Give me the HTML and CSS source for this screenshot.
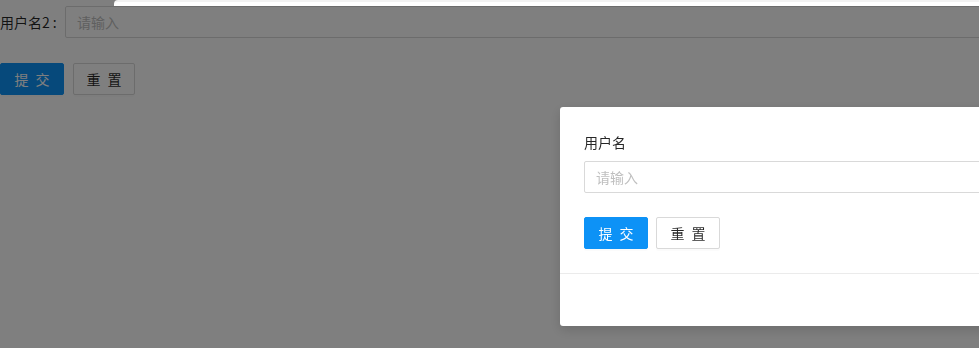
FILE: index.html
```html
<!DOCTYPE html>
<html lang="zh-CN">
<head>
  <meta charset="UTF-8">
  <title>表单</title>
  <link rel="stylesheet" href="styles.css">
</head>
<body>
  <div class="page">
    <div class="form-row">
      <label class="inline-label">用户名2</label>
      <input class="text-input" type="text" placeholder="请输入">
    </div>
    <div class="btn-row">
      <button class="btn btn-primary">提 交</button>
      <button class="btn btn-default narrow">重 置</button>
    </div>
  </div>

  <div class="mask"></div>
  <div class="top-strip"></div>

  <div class="modal">
    <div class="modal-body">
      <div class="form-item">
        <label class="vertical-label">用户名</label>
        <input class="text-input" type="text" placeholder="请输入">
      </div>
      <div class="btn-row modal-btns">
        <button class="btn btn-primary">提 交</button>
        <button class="btn btn-default">重 置</button>
      </div>
    </div>
    <div class="modal-footer"></div>
  </div>
</body>
</html>
```
FILE: styles.css
```css
html, body {
  margin: 0;
  height: 100%;
  overflow: hidden;
}
body {
  font-family: "Noto Sans CJK SC", "Noto Sans", sans-serif;
  font-size: 14px;
  color: rgba(0, 0, 0, 0.85);
  background: #fff;
}

.page {
  width: 1200px;
  padding-top: 6px;
}
.form-row {
  display: flex;
  align-items: center;
}
.inline-label {
  width: 65px;
  line-height: 32px;
  white-space: nowrap;
}
.inline-label::after {
  content: ":";
  margin: 0 8px 0 3px;
}
.text-input {
  box-sizing: border-box;
  flex: 1;
  height: 32px;
  padding: 4px 11px;
  border: 1px solid #d9d9d9;
  border-radius: 2px;
  font-family: inherit;
  font-size: 14px;
  color: rgba(0, 0, 0, 0.85);
  background: #fff;
  outline: none;
}
.text-input::placeholder {
  color: #bfbfbf;
}

.btn-row {
  display: flex;
  gap: 9px;
  margin-top: 25px;
}
.btn {
  box-sizing: border-box;
  width: 64px;
  height: 32px;
  padding: 0;
  border: 1px solid #d9d9d9;
  border-radius: 2px;
  font-family: inherit;
  font-size: 14px;
  letter-spacing: 2px;
  text-indent: 2px;
  box-shadow: 0 2px 0 rgba(0, 0, 0, 0.015);
  cursor: pointer;
}
.btn.narrow { width: 62px; }
.btn-primary {
  color: #fff;
  background: #0d92f6;
  border-color: #0d92f6;
}
.btn-default {
  color: rgba(0, 0, 0, 0.85);
  background: #fff;
}

.mask {
  position: fixed;
  inset: 0;
  background: rgba(0, 0, 0, 0.5);
}
.top-strip {
  position: fixed;
  top: 0;
  left: 114px;
  right: 0;
  height: 6px;
  box-sizing: border-box;
  background: #fff;
  border-top: 2px solid #f2f2f2;
  border-radius: 4px 0 0 0;
}

.modal {
  position: fixed;
  top: 107px;
  left: 560px;
  right: -60px;
  background: #fff;
  border-radius: 3px;
  box-shadow: 0 4px 12px rgba(0, 0, 0, 0.15);
}
.modal-body {
  padding: 24px;
}
.form-item {
  display: flex;
  flex-direction: column;
}
.vertical-label {
  line-height: 22px;
  padding-bottom: 8px;
}
.form-item .text-input {
  flex: none;
  width: 100%;
}
.modal-btns {
  gap: 8px;
  margin-top: 24px;
}
.modal-footer {
  height: 52px;
  border-top: 1px solid #ebebeb;
}
```
